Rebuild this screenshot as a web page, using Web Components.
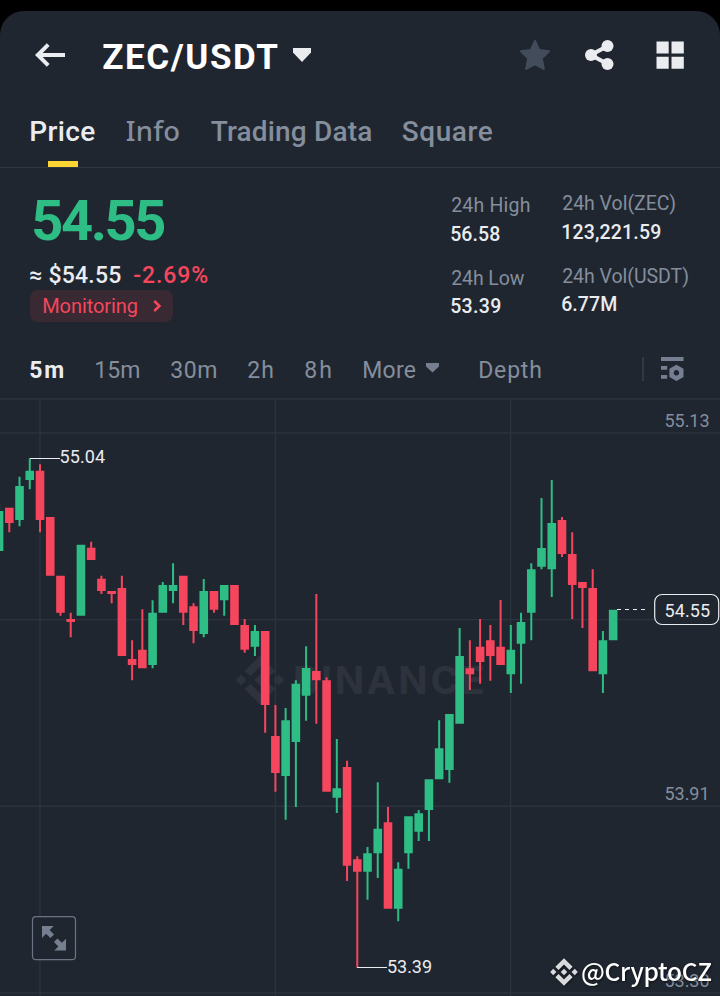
<!DOCTYPE html>
<html lang="en">
<head>
<meta charset="utf-8">
<title>ZEC/USDT</title>
<style>
    html, body {
        margin: 0;
        background: #000;
    }
    body {
        width: 720px;
        height: 996px;
        overflow: hidden;
        font-family: Roboto, "Noto Sans", sans-serif;
    }
</style>
</head>
<body>
<pair-screen></pair-screen>
<script>
const ctx = document.createElement("canvas").getContext("2d");

// one line of text, tracked so that its ink fills the given width
class FitText extends HTMLElement {
    constructor() {
        super();
        this.attachShadow({ mode: "open" });
    }

    connectedCallback() {
        const width = Number(this.getAttribute("width"));
        const size = Number(this.getAttribute("size"));
        const weight = this.getAttribute("weight") || "400";
        const text = this.getAttribute("text");
        const family = this.getAttribute("family") || "Roboto";
        ctx.font = `${weight} ${size}px "${family}", "Noto Sans", sans-serif`;
        const m = ctx.measureText(text);
        const ink = m.actualBoundingBoxLeft + m.actualBoundingBoxRight;
        const spacing = (width - ink) / (text.length - 1);
        this.shadowRoot.innerHTML = `
<style>
    :host {
        display: block;
        flex: none;
        width: ${width}px;
        height: 28px;
    }
    span {
        display: block;
        padding-top: var(--drop, 1px);
        font: ${weight} ${size}px/28px "${family}", "Noto Sans", sans-serif;
        letter-spacing: ${spacing}px;
        margin-left: ${m.actualBoundingBoxLeft + 0.2}px;
        white-space: pre;
    }
</style>
<span></span>`;
        this.shadowRoot.querySelector("span").textContent = text;
    }
}

const BINANCE_MARK = `
    <path d="M-15.3 -9.3L0 -24.5L15.3 -9.3L9.7 -3.7L0 -13.3L-9.7 -3.7Z"/>
    <path d="M-15.3 9.3L0 24.5L15.3 9.3L9.7 3.7L0 13.3L-9.7 3.7Z"/>
    <path d="M-24.5 0L-19 -5.6L-13.4 0L-19 5.6Z"/>
    <path d="M24.5 0L19 -5.6L13.4 0L19 5.6Z"/>
    <path d="M0 -5.8L5.8 0L0 5.8L-5.8 0Z"/>`;

class PairHeader extends HTMLElement {
    constructor() {
        super();
        this.attachShadow({ mode: "open" }).innerHTML = `
<style>
    :host {
        display: flex;
        align-items: center;
        box-sizing: border-box;
        height: 88px;
        padding: 0 35px;
        color: #fff;
        fill: #eaecef;
    }
    svg {
        display: block;
        flex: none;
    }
    .title {
        margin: 3px 16px 0 38px;
    }
    .actions {
        display: flex;
        gap: 35px;
        margin-left: auto;
    }
</style>
<svg width="30" height="24" viewBox="0 0 30 24"><path d="M13.2 1.7L2.8 12L13.2 22.3M3 12H30" fill="none" stroke="#eaecef" stroke-width="4"/></svg>
<fit-text class="title" text="ZEC/USDT" width="174" size="35" weight="700"></fit-text>
<svg width="18" height="14" viewBox="0 0 18 14"><path d="M0 0H18V4.5L9 14L0 4.5Z"/></svg>
<div class="actions">
    <svg width="30" height="30" viewBox="0 0 30 30"><path d="M15 1L19.1 9.9L29 11.2L21.8 18.2L23.8 29L15 24.1L6.2 29L8.2 18.2L1 11.2L10.9 9.9Z" fill="#434c5a" stroke="#434c5a" stroke-width="2" stroke-linejoin="round"/></svg>
    <svg width="29" height="30" viewBox="0 0 29 30"><circle cx="6" cy="15" r="6"/><circle cx="22.5" cy="6" r="6"/><circle cx="22.5" cy="24" r="6"/><path d="M22.5 6L6 15L22.5 24" fill="none" stroke="#eaecef" stroke-width="4.2"/></svg>
    <svg width="36" height="30" viewBox="0 0 36 30"><path d="M7.5 1.5h12.2v12H7.5zM22.5 1.5h12.3v12H22.5zM7.5 16.8h12.2v12H7.5zM22.5 16.8h12.3v12H22.5z"/></svg>
</div>`;
    }
}

class PageTabs extends HTMLElement {
    constructor() {
        super();
        this.attachShadow({ mode: "open" }).innerHTML = `
<style>
    :host {
        display: flex;
        align-items: flex-start;
        gap: 31.5px;
        box-sizing: border-box;
        height: 69px;
        padding: 18px 31px 0;
        border-bottom: 1px solid #323842;
        color: #848e9c;
    }
    .active {
        display: grid;
        grid-template-rows: 44px 6px;
        color: #eaecef;
    }
    .active::after {
        content: "";
        width: 30px;
        margin-left: 17px;
        background: #fcd535;
    }
    .info {
        --drop: 0px;
    }
</style>
<div class="active"><fit-text text="Price" width="64" size="28" weight="500"></fit-text></div>
<fit-text class="info" text="Info" width="52.5" size="27.5" weight="500" family="Noto Sans"></fit-text>
<fit-text text="Trading Data" width="160.5" size="28" weight="500"></fit-text>
<fit-text text="Square" width="90" size="28" weight="500"></fit-text>`;
    }
}

class StatItem extends HTMLElement {
    constructor() {
        super();
        this.attachShadow({ mode: "open" });
    }

    connectedCallback() {
        const [label, lw, value, vw] = this.getAttribute("data").split("|");
        this.shadowRoot.innerHTML = `
<style>
    :host {
        display: block;
        height: 72.5px;
        color: #848e9c;
    }
    .value {
        margin-top: 0.5px;
        color: #eaecef;
    }
</style>
<fit-text text="${label}" width="${lw}" size="19.5"></fit-text>
<fit-text class="value" text="${value}" width="${vw}" size="19.5" weight="500"></fit-text>`;
    }
}

class PriceSummary extends HTMLElement {
    constructor() {
        super();
        this.attachShadow({ mode: "open" }).innerHTML = `
<style>
    :host {
        display: grid;
        grid-template-columns: 421px 111px 1fr;
        box-sizing: border-box;
        height: 170px;
        padding: 21px 0 0 30px;
    }
    .last {
        --drop: 0px;
        height: 72px;
        padding: 18px 0 0 3px;
        box-sizing: border-box;
        color: #2ebd85;
    }
    .approx {
        display: flex;
        gap: 12px;
        height: 29px;
        color: #eaecef;
    }
    .down {
        color: #f6465d;
    }
    .badge {
        --drop: 0px;
        display: flex;
        align-items: center;
        gap: 16px;
        box-sizing: border-box;
        width: 143px;
        height: 32px;
        padding-left: 13px;
        border-radius: 8px;
        background: #382932;
        color: #f6465d;
    }
    .high {
        padding-top: 2px;
    }
</style>
<div>
    <div class="last"><fit-text text="54.55" width="131" size="56" weight="700"></fit-text></div>
    <div class="approx">
        <fit-text text="≈ $54.55" width="91" size="23" weight="500"></fit-text>
        <fit-text class="down" text="-2.69%" width="74" size="23" weight="500"></fit-text>
    </div>
    <div class="badge">
        <fit-text text="Monitoring" width="93.5" size="20"></fit-text>
        <svg width="9" height="12" viewBox="0 0 9 12"><path d="M1.2 1L6.4 6L1.2 11" fill="none" stroke="#f6465d" stroke-width="2.6"/></svg>
    </div>
</div>
<div class="high">
    <stat-item data="24h High|78.5|56.58|49"></stat-item>
    <stat-item data="24h Low|73.5|53.39|49"></stat-item>
</div>
<div>
    <stat-item data="24h Vol(ZEC)|113|123,221.59|98"></stat-item>
    <stat-item data="24h Vol(USDT)|126|6.77M|54"></stat-item>
</div>`;
    }
}

class IntervalBar extends HTMLElement {
    constructor() {
        super();
        this.attachShadow({ mode: "open" }).innerHTML = `
<style>
    :host {
        --drop: 2px;
        display: flex;
        align-items: center;
        gap: 32px;
        box-sizing: border-box;
        height: 62px;
        padding: 2px 36px 0 30px;
        border-bottom: 2px solid #2a303b;
        color: #848e9c;
    }
    .active {
        color: #eaecef;
    }
    .more {
        display: flex;
        align-items: center;
        gap: 10px;
        margin-right: 8.5px;
    }
    .tools {
        display: flex;
        align-items: center;
        gap: 16px;
        margin-left: auto;
    }
    .tools::before {
        content: "";
        width: 2px;
        height: 24px;
        background: #323843;
    }
</style>
<fit-text class="active" text="5m" width="33" size="23" weight="700"></fit-text>
<fit-text text="15m" width="44" size="23"></fit-text>
<fit-text text="30m" width="45" size="23"></fit-text>
<fit-text text="2h" width="25" size="23"></fit-text>
<fit-text text="8h" width="26" size="23"></fit-text>
<div class="more">
    <fit-text text="More" width="52.5" size="23"></fit-text>
    <svg width="13" height="14" viewBox="0 0 13 14"><path d="M0 1H13V4.5L6.5 10.5L0 4.5Z" fill="#767f8f"/></svg>
</div>
<fit-text text="Depth" width="62" size="23"></fit-text>
<div class="tools">
    <svg width="24" height="26" viewBox="0 0 24 26"><g fill="#767f91"><path d="M1 1h22.5v4H1zM1 10h6.2v3.7H1zM1 19h6.2v3.7H1z"/><path fill-rule="evenodd" d="M16.4 8.7L23.5 12.8V21L16.4 25L9.4 21V12.8ZM16.4 14a2.8 2.8 0 1 0 .01 0z"/></g></svg>
</div>`;
    }
}

// [up, high, body top, body bottom, low]
const CANDLES = [
    [1, 502, 511, 551, 551], [0, 507.7, 507.7, 523, 532.3], [1, 476.7, 486, 520, 526.3], [1, 458.3, 470.7, 480, 489.3],
    [0, 464.3, 470.7, 520, 532.3], [0, 517, 517, 575.7, 575.7], [0, 575.7, 575.7, 612.7, 615.7], [0, 612.7, 619, 622, 637.3],
    [1, 544.7, 544.7, 615.7, 615.7], [0, 541.7, 547.7, 560, 560], [0, 575.7, 578.7, 591, 594], [0, 591, 591, 594, 603.3],
    [0, 575.7, 588, 656, 656], [0, 640.3, 659, 665, 680.3], [0, 609.3, 649.7, 668.3, 668.3], [1, 600.3, 612.7, 665, 668.3],
    [1, 582, 585, 612.7, 612.7], [1, 563.3, 585, 591, 603.3], [0, 575.7, 575.7, 612.7, 625], [0, 603.3, 606.3, 631, 643.3],
    [1, 579, 591, 634, 637.3], [0, 591, 591, 609.7, 612.7], [1, 585, 585, 600.3, 615.7], [0, 585, 585, 625, 625],
    [0, 619, 625, 649.7, 652.7], [1, 625, 631, 646.7, 656], [0, 631, 631, 705, 732.7], [0, 705, 736, 773, 791.7],
    [1, 708, 720.3, 776, 819.7], [1, 680.3, 683.7, 742, 807], [1, 646.3, 668, 695.7, 720.7], [0, 594, 671, 680.3, 723.7],
    [0, 677.3, 680.3, 791.7, 791.7], [1, 739, 788.3, 797.7, 813], [0, 760.7, 767, 865.7, 881], [0, 856.3, 859.3, 871.7, 967.5],
    [1, 847, 853.3, 871.7, 899.7], [1, 782.3, 828.7, 853.3, 878], [0, 807, 822.3, 908.7, 908.7], [1, 862.3, 868.7, 908.7, 921.3],
    [1, 816.3, 816.3, 853.3, 868.7], [1, 810, 813.3, 831.7, 841], [1, 779.3, 779.3, 810, 841], [1, 720.3, 748.3, 779.3, 779.3],
    [1, 714, 714, 770, 782.7], [1, 628, 656, 723.7, 723.7], [0, 640.3, 668.3, 674.3, 690], [0, 619, 646.7, 662, 683.7],
    [0, 625, 640.3, 656, 680.7], [0, 600, 646.7, 665, 665], [1, 625, 649.7, 674.3, 693], [1, 612.7, 622, 643.7, 683.7],
    [1, 563.3, 569.3, 612.7, 640.3], [1, 498, 548, 566.7, 569.3], [1, 480, 523, 569.3, 597], [0, 517, 520, 554, 557],
    [0, 532.3, 554, 585, 619], [0, 582, 582, 588, 628], [0, 569.3, 588, 671.3, 671.3], [1, 631, 640.3, 674.3, 693],
    [1, 609.7, 609.7, 640.3, 640.3],
];

class CandleChart extends HTMLElement {
    constructor() {
        super();
        this.attachShadow({ mode: "open" });
    }

    connectedCallback() {
        this.shadowRoot.innerHTML = `
<style>
    :host {
        display: block;
        height: 596px;
    }
    svg {
        display: block;
    }
    text {
        font-family: Roboto, sans-serif;
        font-size: 18px;
    }
</style>
<svg width="720" height="596" viewBox="0 400 720 596">
    <path d="M40 400V996M275.4 400V996M510.6 400V996M0 433H720M0 619.6H720M0 806.3H720M0 993H720" stroke="#2d333e" stroke-width="1.4" fill="none"/>
    <g fill="#2e323d">
        <g transform="translate(260 680)">${BINANCE_MARK}</g>
        <text x="293" y="694" textLength="192" style="font: 700 38.5px Inter, sans-serif">BINANCE</text>
    </g>
    ${this.candles()}
    <path d="M30 458.5H60M357 967.5H387" stroke="#eaecef" stroke-width="1.2"/>
    <path d="M617 609.5H645" stroke="#eaecef" stroke-dasharray="4 4"/>
    <g fill="#848e9c">
        <text x="664.5" y="427" textLength="45">55.13</text>
        <text x="664.5" y="800" textLength="45">53.91</text>
        <text x="664.5" y="987" textLength="45">53.30</text>
    </g>
    <rect x="654.7" y="594.5" width="64" height="30" rx="7.5" fill="#202630" stroke="#eaecef" stroke-width="1.2"/>
    <g fill="#eaecef">
        <text x="59.5" y="463" textLength="45.5">55.04</text>
        <text x="387" y="973" textLength="45">53.39</text>
        <text x="664.5" y="617" textLength="45.5">54.55</text>
    </g>
    <rect x="32.5" y="916.7" width="43" height="43" rx="3.5" fill="#202630" stroke="#6b7484" stroke-width="1.2"/>
    <g fill="#767f90">
        <path d="M42 926H53.7L49.7 930L54 934.4L50.4 938L46 933.7L42 938Z"/>
        <path d="M66 950.5H54.3L58.3 946.5L54 942L57.4 938.6L61.9 942.8L66 938.7Z"/>
    </g>
    <g style="filter: drop-shadow(1px 1px 1px #0008)">
        <g transform="translate(564 972) scale(.565)" fill="#d9dadb">${BINANCE_MARK}</g>
        <text x="581" y="981" textLength="131" fill="#fff" style="font: 500 24.5px 'Noto Sans CJK SC', sans-serif">@CryptoCZ</text>
    </g>
</svg>`;
    }

    candles() {
        return CANDLES.map(([up, high, top, bottom, low], i) => {
            const x = 40 + (i - 4) * 10.235;
            const color = up ? "#2ebd85" : "#f6465d";
            return `<path d="M${x - 1} ${high}h2V${low}h-2zM${x - 4.3} ${top}h8.6V${bottom}h-8.6z" fill="${color}"/>`;
        }).join("");
    }
}

class PairScreen extends HTMLElement {
    constructor() {
        super();
        this.attachShadow({ mode: "open" }).innerHTML = `
<style>
    :host {
        display: block;
        box-sizing: border-box;
        height: 996px;
        padding-top: 11px;
    }
    main {
        height: 985px;
        border-radius: 24px 24px 0 0;
        background: #202630;
        overflow: hidden;
    }
</style>
<main>
    <pair-header></pair-header>
    <page-tabs></page-tabs>
    <price-summary></price-summary>
    <interval-bar></interval-bar>
    <candle-chart></candle-chart>
</main>`;
    }
}

customElements.define("fit-text", FitText);
customElements.define("pair-header", PairHeader);
customElements.define("page-tabs", PageTabs);
customElements.define("stat-item", StatItem);
customElements.define("price-summary", PriceSummary);
customElements.define("interval-bar", IntervalBar);
customElements.define("candle-chart", CandleChart);
customElements.define("pair-screen", PairScreen);
</script>
</body>
</html>
